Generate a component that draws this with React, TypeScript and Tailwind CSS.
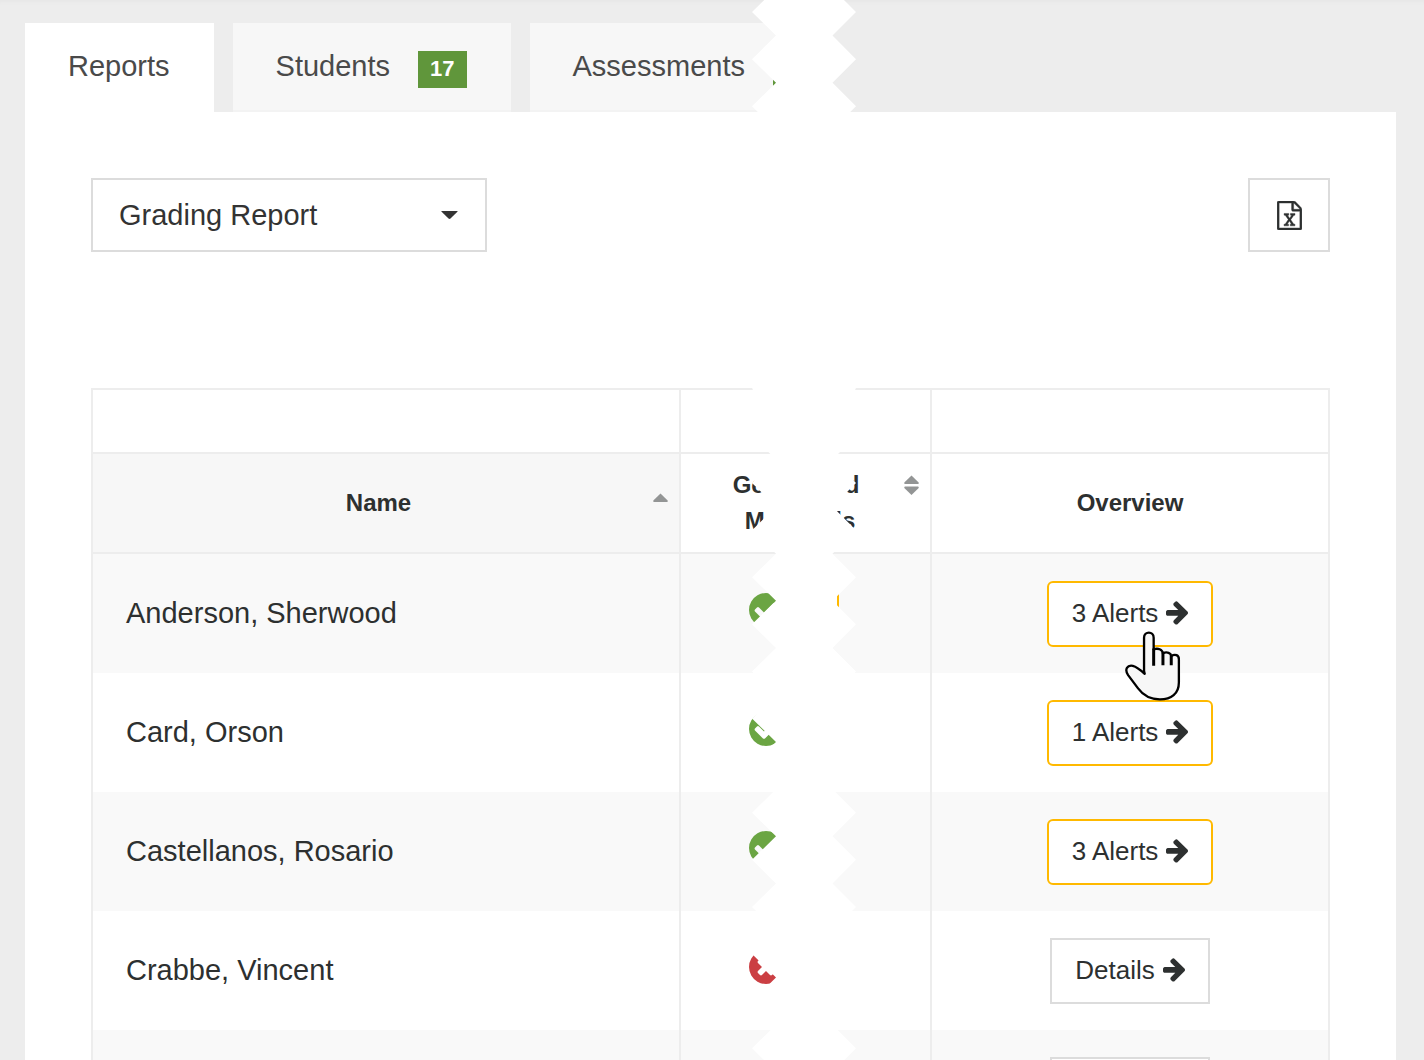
import { useState } from "react";

type Status = "ok" | "failed";

interface StudentRow {
  name: string;
  status: Status;
  flagged?: boolean;
  alerts: number;
}

const students: StudentRow[] = [
  { name: "Anderson, Sherwood", status: "ok", flagged: true, alerts: 3 },
  { name: "Card, Orson", status: "ok", alerts: 1 },
  { name: "Castellanos, Rosario", status: "ok", alerts: 3 },
  { name: "Crabbe, Vincent", status: "failed", alerts: 0 },
  { name: "Dahl, Roald", status: "ok", alerts: 0 },
];

const tabs = [
  { id: "reports", label: "Reports" },
  { id: "students", label: "Students", count: 17 },
  { id: "assessments", label: "Assessments", count: 8 },
];

function ArrowRight() {
  return (
    <svg className="w-[22px] h-6 shrink-0" viewBox="128 160 1472 1606" fill="currentColor" aria-hidden="true">
      <path d="M1600 960q0 54-37 91l-651 651q-39 37-91 37-51 0-90-37l-75-75q-38-38-38-91t38-91l293-293h-704q-52 0-84.5-37.5t-32.5-90.5v-128q0-53 32.5-90.5t84.5-37.5h704l-293-294q-38-36-38-90t38-90l75-75q38-38 90-38 53 0 91 38l651 651q37 35 37 90z" />
    </svg>
  );
}

function ExcelIcon() {
  return (
    <svg className="w-[25px] h-[29px]" viewBox="128 0 1536 1792" fill="currentColor" stroke="currentColor" strokeWidth={24} aria-hidden="true">
      <path d="M1596 380q28 28 48 76t20 88v1152q0 40-28 68t-68 28h-1344q-40 0-68-28t-28-68v-1600q0-40 28-68t68-28h896q40 0 88 20t76 48zm-444-244v376h376q-10-29-22-41l-313-313q-12-12-41-22zm384 1528v-1024h-416q-40 0-68-28t-28-68v-416h-768v1536h1280zm-979-234v106h281v-106h-75l103-161q5-7 10-16.5t7.5-13.5 3.5-4h2q1 4 5 10 2 4 4.5 7.5t6 8 6.5 8.5l107 161h-76v106h291v-106h-68l-192-273 195-282h67v-107h-279v107h74l-103 159q-4 7-10 16.5t-9 13.5l-2 3h-2q-1-4-5-10-6-11-17-23l-106-159h76v-107h-290v107h68l189 272-194 283h-68z" />
    </svg>
  );
}

function StatusIcon({ status }: { status: Status }) {
  if (status === "ok") {
    return (
      <svg className="size-[34px] text-[#6ba543]" viewBox="128 128 1536 1536" fill="currentColor" role="img" aria-label="Complete">
        <path d="M1412 734q0-28-18-46l-91-90q-19-19-45-19t-45 19l-408 407-226-226q-19-19-45-19t-45 19l-91 90q-18 18-18 46 0 27 18 45l362 362q19 19 45 19 27 0 46-19l543-543q18-18 18-45zm252 162q0 209-103 385.5t-279.5 279.5-385.5 103-385.5-103-279.5-279.5-103-385.5 103-385.5 279.5-279.5 385.5-103 385.5 103 279.5 279.5 103 385.5z" />
      </svg>
    );
  }
  return (
    <svg className="size-[34px] text-[#cb3f43]" viewBox="128 128 1536 1536" fill="currentColor" role="img" aria-label="Incomplete">
      <path d="M1277 1122q0-26-19-45l-181-181 181-181q19-19 19-45 0-27-19-46l-90-90q-19-18-46-18-26 0-45 18l-181 181-181-181q-19-18-45-18-27 0-46 18l-90 90q-19 19-19 46 0 26 19 45l181 181-181 181q-19 19-19 45 0 27 19 46l90 90q19 18 46 18 26 0 45-18l181-181 181 181q19 18 45 18 27 0 46-18l90-90q19-19 19-46zm387-226q0 209-103 385.5t-279.5 279.5-385.5 103-385.5-103-279.5-279.5-103-385.5 103-385.5 279.5-279.5 385.5-103 385.5 103 279.5 279.5 103 385.5z" />
    </svg>
  );
}

function SortIcon({ direction }: { direction?: "asc" }) {
  return (
    <svg className="mt-2 w-[15px] h-5 shrink-0 text-[#939595]" viewBox="0 0 15 20" fill="currentColor" aria-hidden="true">
      <path d="M7.5 0.5 L14.7 7.4 Q15 9 14 9 H1 Q0 9 0.3 7.4 Z" />
      {!direction && <path d="M7.5 20 L14.7 13 Q15 11.5 14 11.5 H1 Q0 11.5 0.3 13 Z" />}
    </svg>
  );
}

function HandCursor() {
  return (
    <svg
      className="absolute left-[78px] top-[50px] z-10 w-14 h-[70px] pointer-events-none"
      viewBox="313 213 168 211"
      fill="#f7f7f7"
      stroke="#000"
      strokeWidth={7}
      strokeLinejoin="round"
      aria-hidden="true"
    >
      <path d="M372 342 L370 334 V233 C370 213 399 213 399 233 V268 C412 264 425 268 427 280 C440 274 451 280 452 288 C464 281 475 286 475 298 V368 C475 402 452 419 418 419 C390 419 368 408 352 386 L322 346 C310 328 320 315 336 318 C348 321 360 331 372 342 Z" />
      <path d="M399 266 V318 M427 278 V316 M452 286 V316" fill="none" strokeWidth={9} />
    </svg>
  );
}

// Zigzag strip that hides the columns left out between both halves
function PageTear() {
  const tooth = 47.1;
  const start = -11.5;
  const left: string[] = [];
  const right: string[] = [];
  for (let i = 0; i < 60; i++) {
    const y = start + i * tooth;
    left.push(`24,${y}`, `0,${y + tooth / 2}`);
    right.unshift(`104,${y + tooth / 2}`, `80.5,${y}`);
  }
  return (
    <svg className="absolute top-0 left-[752px] z-20 w-[104px] h-full pointer-events-none" aria-hidden="true">
      <polygon points={[...left, ...right].join(" ")} fill="#fff" />
    </svg>
  );
}

function OverviewButton({ alerts }: { alerts: number }) {
  const look = alerts > 0 ? "rounded-md border-[#ffb900]" : "border-[#dcdcdc]";
  return (
    <button className={`flex items-center gap-2 h-[66px] px-[23px] pb-0.5 border-2 bg-white text-[26px] leading-8 text-[#2d3030] ${look}`}>
      <span>{alerts > 0 ? `${alerts} Alerts` : "Details"}</span>
      <ArrowRight />
    </button>
  );
}

export default function App() {
  const [activeTab, setActiveTab] = useState("reports");
  const [report, setReport] = useState("grading");

  return (
    <div className="relative flex flex-col h-screen overflow-hidden bg-[#ededed] pt-[23px] pl-[25px] pr-7 font-['Liberation_Sans',Arial,sans-serif] text-[29px] leading-9 text-[#2d3030] shadow-[inset_0_6px_6px_-6px_rgba(0,0,0,0.05)]">
      <nav className="flex gap-[19px]">
        {tabs.map((tab) => (
          <a
            key={tab.id}
            href={`#${tab.id}`}
            onClick={() => setActiveTab(tab.id)}
            className={`flex items-start gap-7 h-[89px] pt-[25px] pl-[43px] border-b-2 text-[#4a4a4a] ${
              tab.id === "assessments" ? "pr-4" : "pr-11"
            } ${activeTab === tab.id ? "bg-white border-white" : "bg-[#f7f7f7] border-[#f3f3f3]"}`}
          >
            <span>{tab.label}</span>
            {tab.count && (
              <span className="mt-[3px] h-[37px] px-3 bg-[#60963b] text-white text-[22px] leading-9 font-bold">{tab.count}</span>
            )}
          </a>
        ))}
      </nav>

      <main className="flex-1 bg-white px-[66px] pt-[66px]">
        <div className="flex justify-between">
          <div className="relative w-[396px]">
            <select
              aria-label="Report"
              value={report}
              onChange={(e) => setReport(e.target.value)}
              className="appearance-none w-full h-[74px] pl-[26px] pr-16 border-2 border-[#dcdcdc] bg-white text-[#333]"
            >
              <option value="grading">Grading Report</option>
              <option value="progress">Progress Report</option>
            </select>
            <svg className="absolute right-[29px] top-[33px] w-[17px] h-2 pointer-events-none text-[#333]" viewBox="0 0 17 8" fill="currentColor" aria-hidden="true">
              <path d="M0.8 0 H16.2 Q17 0 16.4 0.8 L9.5 7.5 Q8.5 8.4 7.5 7.5 L0.6 0.8 Q0 0 0.8 0 Z" />
            </svg>
          </div>
          <button aria-label="Export to Excel" className="flex items-center justify-center w-[82px] h-[74px] border-2 border-[#dcdcdc] bg-white text-[#2d3030]">
            <ExcelIcon />
          </button>
        </div>

        <table className="mt-[136px] w-full table-fixed border-separate border-spacing-0 border-t-2 border-l-2 border-[#ededed]">
          <colgroup>
            <col />
            <col className="w-[251px]" />
            <col className="w-[398px]" />
          </colgroup>
          <thead className="text-2xl leading-9">
            <tr className="h-16">
              <td className="border-r-2 border-b-2 border-[#ededed]"></td>
              <td className="border-r-2 border-b-2 border-[#ededed]"></td>
              <td className="border-r-2 border-b-2 border-[#ededed]"></td>
            </tr>
            <tr className="h-[100px]">
              <th scope="col" aria-sort="ascending" className="px-[11px] bg-[#f7f7f7] border-r-2 border-b-2 border-[#ededed]">
                <div className="flex items-start">
                  <span className="flex-1">Name</span>
                  <SortIcon direction="asc" />
                </div>
              </th>
              <th scope="col" className="px-[11px] border-r-2 border-b-2 border-[#ededed]">
                <div className="flex items-start">
                  <div className="flex flex-1 justify-center">
                    <div className="flex flex-col pr-1 text-left whitespace-nowrap">
                      <span>General Ed</span>
                      <span className="pl-3">Met Skills</span>
                    </div>
                  </div>
                  <SortIcon />
                </div>
              </th>
              <th scope="col" className="border-r-2 border-b-2 border-[#ededed]">Overview</th>
            </tr>
          </thead>
          <tbody>
            {students.map((student, i) => (
              <tr key={student.name} className="h-[119px] odd:bg-[#f9f9f9]">
                <td className="pl-[33px] pb-0.5 border-r-2 border-[#ededed]">{student.name}</td>
                <td className="pl-[68px] pb-2 border-r-2 border-[#ededed]">
                  <div className="flex gap-1">
                    <StatusIcon status={student.status} />
                    {student.flagged && <button aria-label="Show alerts" className="w-[52px] border-2 border-[#ffb900] bg-white" />}
                  </div>
                </td>
                <td className="border-r-2 border-[#ededed]">
                  <div className="flex justify-center">
                    <div className="relative">
                      <OverviewButton alerts={student.alerts} />
                      {i === 0 && <HandCursor />}
                    </div>
                  </div>
                </td>
              </tr>
            ))}
          </tbody>
        </table>
      </main>

      <PageTear />
    </div>
  );
}
